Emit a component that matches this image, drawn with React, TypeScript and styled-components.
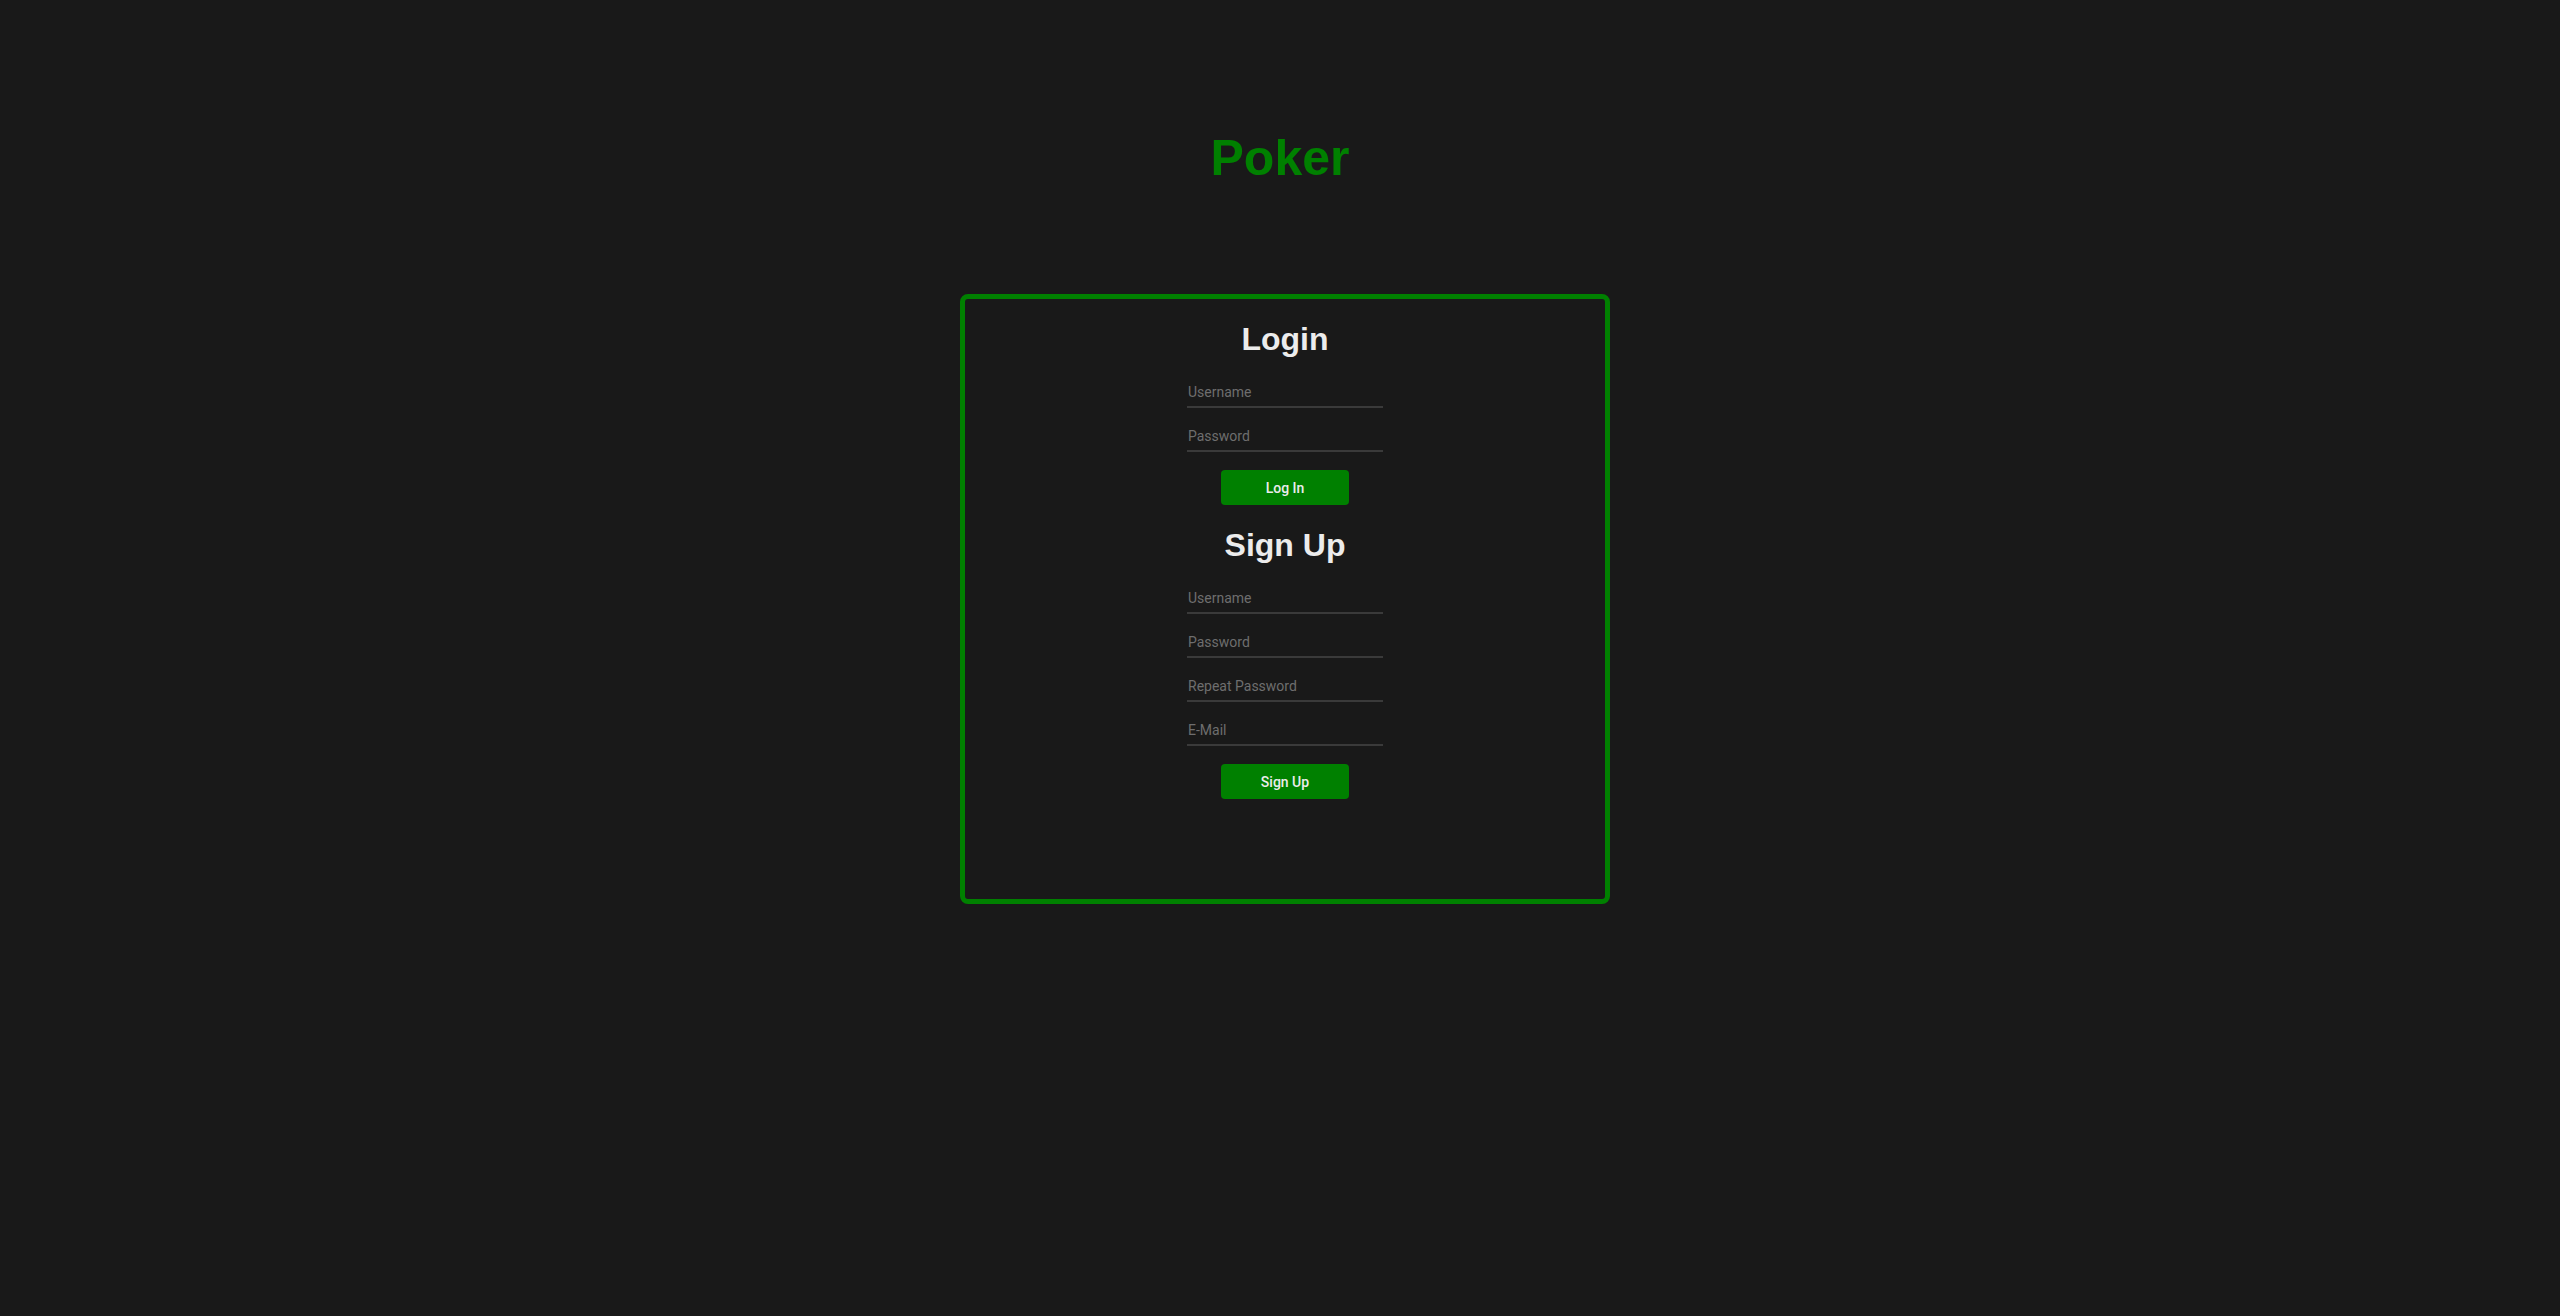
import styled, { createGlobalStyle } from 'styled-components';

const GREEN = '#008000';

const GlobalStyle = createGlobalStyle`
  html, body {
    margin: 0;
    padding: 0;
    background: #191919;
  }

  body {
    min-height: 100vh;
    font-family: 'Liberation Sans', Arial, sans-serif;
  }
`;

const loginFields = ['Username', 'Password'];
const signUpFields = ['Username', 'Password', 'Repeat Password', 'E-Mail'];

interface FormSectionProps {
  title: string;
  fields: string[];
  action: string;
}

const FormSection = ({ title, fields, action }: FormSectionProps) => {
  return (
    <Section>
      <Heading>{title}</Heading>
      <Fields>
        {fields.map((field) => (
          <Field
            key={field}
            placeholder={field}
            type={field.includes('Password') ? 'password' : 'text'}
          />
        ))}
      </Fields>
      <SubmitButton type="button">{action}</SubmitButton>
    </Section>
  );
};

export default function App() {
  return (
    <>
      <GlobalStyle />
      <Page>
        <Title>Poker</Title>
        <CardRow>
          <Card>
            <FormSection title="Login" fields={loginFields} action="Log In" />
            <FormSection
              title="Sign Up"
              fields={signUpFields}
              action="Sign Up"
            />
          </Card>
        </CardRow>
      </Page>
    </>
  );
}

const Page = styled.div`
  display: flex;
  flex-direction: column;
  align-items: center;
  padding-top: 133px;
`;

const Title = styled.h1`
  margin: 0 0 111px;
  font-family: 'Liberation Sans', Arial, sans-serif;
  font-size: 50px;
  line-height: 1;
  font-weight: 700;
  color: ${GREEN};
`;

const CardRow = styled.div`
  display: flex;
  justify-content: center;
  width: 100%;
`;

const Card = styled.div`
  box-sizing: border-box;
  width: 650px;
  height: 610px;
  margin-left: 10px;
  padding-top: 24px;
  border: 5px solid ${GREEN};
  border-radius: 8px;
  display: flex;
  flex-direction: column;
  align-items: center;
  gap: 24px;
`;

const Section = styled.div`
  display: flex;
  flex-direction: column;
  align-items: center;
`;

const Heading = styled.h2`
  margin: 0 0 23px;
  font-family: 'Liberation Sans', Arial, sans-serif;
  font-size: 32px;
  line-height: 1;
  font-weight: 700;
  color: #ececec;
`;

const Fields = styled.div`
  display: flex;
  flex-direction: column;
  gap: 14px;
`;

const Field = styled.input`
  box-sizing: border-box;
  width: 196px;
  height: 30px;
  padding: 0 1px;
  border: none;
  border-bottom: 2px solid #3a3a3a;
  background: transparent;
  outline: none;
  font-family: Roboto, 'Noto Sans', sans-serif;
  font-size: 14px;
  color: #d8d8d8;

  &::placeholder {
    color: #6e6e6e;
  }
`;

const SubmitButton = styled.button`
  width: 128px;
  height: 35px;
  margin-top: 18px;
  border: none;
  border-radius: 4px;
  background: ${GREEN};
  font-family: Roboto, 'Noto Sans', sans-serif;
  font-size: 14px;
  font-weight: 500;
  color: #ececec;
  cursor: pointer;
`;
